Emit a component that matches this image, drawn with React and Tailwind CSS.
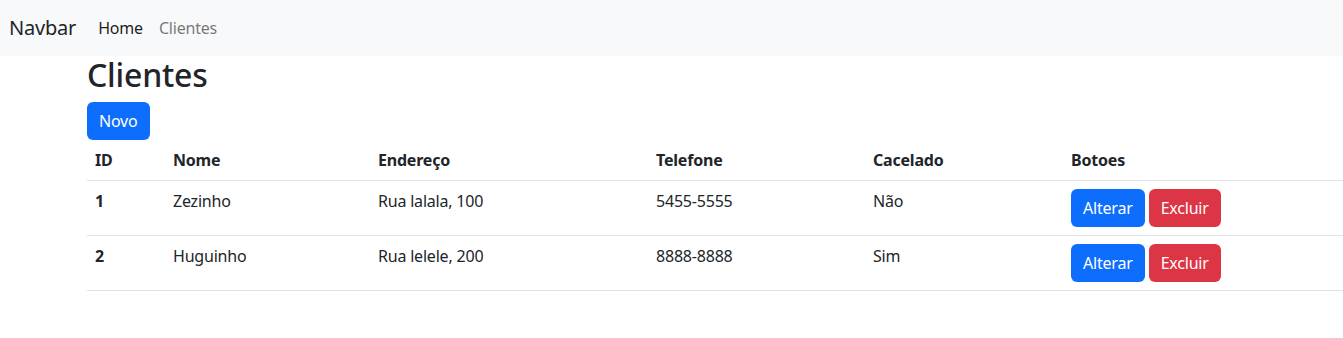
export default function App() {
  const clientes = [
    { id: 1, nome: 'Zezinho', endereco: 'Rua lalala, 100', telefone: '5455-5555', cancelado: 'Não' },
    { id: 2, nome: 'Huguinho', endereco: 'Rua lelele, 200', telefone: '8888-8888', cancelado: 'Sim' },
  ]

  return (
    <div className="min-h-screen bg-white text-[#212529] text-base leading-6 font-['Segoe_UI','Noto_Sans',sans-serif] tracking-[-0.2px] overflow-hidden">
      {/* Navbar */}
      <nav className="h-14 bg-[#f8f9fa] flex items-center px-[9px]">
        <span className="text-xl leading-[30px] mr-[22px]">Navbar</span>
        <a className="text-[#000000e6] mr-4">Home</a>
        <a className="text-[#0000008c]">Clientes</a>
      </nav>

      <div className="pl-[87px]">
        <h1 className="text-[32px] leading-[38px] font-medium mb-2">Clientes</h1>
        <button className="bg-[#0d6efd] text-white px-3 py-[6px] rounded-md leading-[26px]">Novo</button>

        <table className="w-full border-collapse text-left table-fixed">
          <colgroup>
            <col className="w-[78px]" />
            <col className="w-[205px]" />
            <col className="w-[278px]" />
            <col className="w-[217px]" />
            <col className="w-[198px]" />
            <col />
          </colgroup>
          <thead>
            <tr className="border-b border-[#dee2e6]">
              {['ID', 'Nome', 'Endereço', 'Telefone', 'Cacelado', 'Botoes'].map(h => (
                <th key={h} className="p-2 font-bold h-10">{h}</th>
              ))}
            </tr>
          </thead>
          <tbody>
            {clientes.map(c => (
              <tr key={c.id} className="border-b border-[#dee2e6] align-top">
                <td className="p-2 font-bold">{c.id}</td>
                <td className="p-2">{c.nome}</td>
                <td className="p-2">{c.endereco}</td>
                <td className="p-2">{c.telefone}</td>
                <td className="p-2">{c.cancelado}</td>
                <td className="p-2">
                  <div className="flex gap-1">
                    <button className="bg-[#0d6efd] text-white px-3 py-[6px] rounded-md leading-[26px]">Alterar</button>
                    <button className="bg-[#dc3545] text-white px-3 py-[6px] rounded-md leading-[26px]">Excluir</button>
                  </div>
                </td>
              </tr>
            ))}
          </tbody>
        </table>
      </div>
    </div>
  )
}
